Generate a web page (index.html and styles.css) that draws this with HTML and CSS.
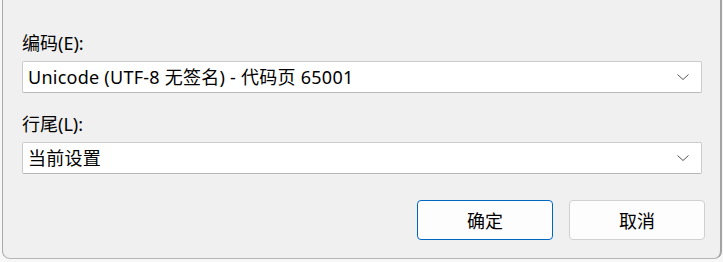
FILE: index.html
```html
<!DOCTYPE html>
<html lang="zh-CN">
<head>
    <meta charset="UTF-8">
    <title>高级保存选项</title>
    <link rel="stylesheet" href="styles.css">
</head>
<body>
    <div class="backdrop">
        <div class="dialog">
            <div class="field">
                <label class="field-label">编码(E):</label>
                <div class="combo">
                    <span class="combo-value">Unicode (UTF-8 无签名) - 代码页 65001</span>
                    <svg class="combo-arrow" viewBox="0 0 12 6">
                        <path d="M0.5 0.5L6 5.5L11.5 0.5"/>
                    </svg>
                </div>
            </div>
            <div class="field">
                <label class="field-label">行尾(L):</label>
                <div class="combo">
                    <span class="combo-value">当前设置</span>
                    <svg class="combo-arrow" viewBox="0 0 12 6">
                        <path d="M0.5 0.5L6 5.5L11.5 0.5"/>
                    </svg>
                </div>
            </div>
            <div class="actions">
                <button class="btn btn-primary">确定</button>
                <button class="btn">取消</button>
            </div>
        </div>
    </div>
</body>
</html>
```

FILE: styles.css
```css
/* Окно диалога */
body {
    margin: 0;
    background-color: #f7f7f7;
    font-family: "Noto Sans", "Noto Sans CJK SC", sans-serif;
    font-size: 18px;
    color: #000;
}

.backdrop {
    height: 262px;
    padding-left: 2px;
    padding-right: 1px;
    overflow: hidden;
}

.dialog {
    height: 259px;
    box-sizing: border-box;
    background-color: #f0f0f0;
    border-left: 1px solid #a9a9a9;
    border-right: 2px solid #a3a3a3;
    border-bottom: 1px solid #b5b5b5;
    border-radius: 0 0 8px 8px;
    padding: 32px 18px 0 19px;
}

.field + .field {
    margin-top: 20px;
}

.field-label {
    display: block;
    height: 22px;
    line-height: 22px;
    margin-bottom: 7px;
}

.combo {
    display: flex;
    align-items: center;
    height: 32px;
    box-sizing: border-box;
    background-color: #fff;
    border: 1px solid #cbcbcb;
    border-bottom-color: #b8b8b8;
    border-radius: 2px;
    padding: 0 12px 0 5px;
}

.combo-value {
    flex: 1;
    line-height: 30px;
    letter-spacing: 0.25px;
    white-space: nowrap;
}

.combo-arrow {
    width: 12px;
    height: 6px;
    fill: none;
    stroke: #555;
    stroke-width: 1;
}

/* Кнопки */
.actions {
    display: flex;
    justify-content: flex-end;
    gap: 16px;
    margin-top: 26px;
    margin-right: -3px;
}

.btn {
    width: 136px;
    height: 40px;
    background-color: #fdfdfd;
    border: 1px solid #d0d0d0;
    border-radius: 4px;
    font-family: inherit;
    font-size: 18px;
    color: #000;
    padding: 0;
}

.btn-primary {
    border: 1px solid #0067c0;
}
```
